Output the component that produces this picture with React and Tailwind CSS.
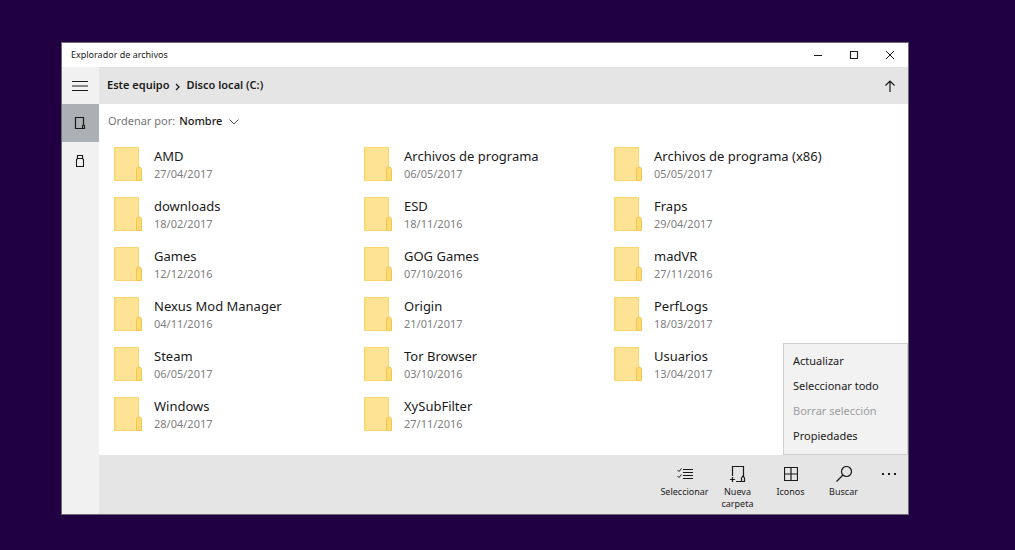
const folders = [
  ["AMD", "27/04/2017"],
  ["Archivos de programa", "06/05/2017"],
  ["Archivos de programa (x86)", "05/05/2017"],
  ["downloads", "18/02/2017"],
  ["ESD", "18/11/2016"],
  ["Fraps", "29/04/2017"],
  ["Games", "12/12/2016"],
  ["GOG Games", "07/10/2016"],
  ["madVR", "27/11/2016"],
  ["Nexus Mod Manager", "04/11/2016"],
  ["Origin", "21/01/2017"],
  ["PerfLogs", "18/03/2017"],
  ["Steam", "06/05/2017"],
  ["Tor Browser", "03/10/2016"],
  ["Usuarios", "13/04/2017"],
  ["Windows", "28/04/2017"],
  ["XySubFilter", "27/11/2016"],
];

function Icon({ w, h, children, className = "" }) {
  return (
    <svg
      width={w}
      height={h}
      viewBox={`0 0 ${w} ${h}`}
      fill="none"
      stroke="currentColor"
      aria-hidden="true"
      className={`shrink-0 ${className}`}
    >
      {children}
    </svg>
  );
}

function FolderIcon() {
  return (
    <Icon w={28} h={34}>
      <path d="M.5.5h24v33H.5z" fill="#ffe394" stroke="#f8d66e" />
      <path d="M1.500 1v32" stroke="#fbdc80" />
      <path d="M22.500 33.500V23q0-3 2.500-3t2.500 3v10.500z" fill="#fddb74" stroke="#f0c552" />
    </Icon>
  );
}

function TitleBar() {
  return (
    <header className="flex h-6 items-center bg-white">
      <h1 className="flex-1 pl-[9px] text-[9px] leading-3">Explorador de archivos</h1>
      <button aria-label="Minimizar" className="flex h-6 w-9 items-center justify-center">
        <Icon w={10} h={10}><path d="M1 5.500h8" /></Icon>
      </button>
      <button aria-label="Maximizar" className="flex h-6 w-9 items-center justify-center">
        <Icon w={10} h={10}><path d="M1.500 1.500h7v7h-7z" strokeWidth="1.100" /></Icon>
      </button>
      <button aria-label="Cerrar" className="flex h-6 w-9 items-center justify-center">
        <Icon w={10} h={10}><path d="m1 1 8 8M9 1 1 9" /></Icon>
      </button>
    </header>
  );
}

function Sidebar() {
  return (
    <nav aria-label="Unidades" className="flex w-[37px] shrink-0 flex-col bg-[#f1f1f1]">
      <button aria-label="Menú" className="flex h-[37px] items-center justify-center pr-[1px]">
        <Icon w={16} h={10}><path d="M0 .5h16M0 5h16M0 9.500h16" /></Icon>
      </button>
      <button aria-label="Disco local" className="flex h-[38px] items-center justify-center bg-[#aab0b3] pr-[1px]">
        <Icon w={12} h={12}>
          <path d="M8.500 11.500h-7V.5h8v7" strokeWidth="1.200" />
          <path d="M8.500 11.500V9l1-1.500 1 1.500v2.500z" strokeWidth="1.200" />
        </Icon>
      </button>
      <button aria-label="Unidad extraíble" className="flex h-[38px] items-center justify-center pr-[1px]">
        <Icon w={10} h={14}>
          <path d="M2.500 4.500v-3h5v3" strokeWidth="1.100" />
          <path d="M2.500 4.500h5l1 1v7h-7v-7z" strokeWidth="1.100" />
        </Icon>
      </button>
    </nav>
  );
}

function PathBar() {
  return (
    <div className="flex h-[37px] items-center bg-[#e5e5e5] pr-3 pl-2">
      <nav aria-label="Ruta" className="flex flex-1 items-center gap-[6px] text-[11px] font-semibold">
        <a href="#equipo">Este equipo</a>
        <Icon w={5} h={8} className="mt-[2px]"><path d="m1 1 3 3-3 3" strokeWidth="1.300" /></Icon>
        <a href="#disco">Disco local (C:)</a>
      </nav>
      <button aria-label="Subir">
        <Icon w={12} h={12}><path d="M6 12V1M1.500 5.500 6 1l4.500 4.500" strokeWidth="1.200" /></Icon>
      </button>
    </div>
  );
}

function CommandButton({ label, children }) {
  return (
    <button className="flex w-[53px] flex-col items-center gap-[2px] text-[9px] leading-3">
      <span className="flex h-5 items-center">{children}</span>
      {label}
    </button>
  );
}

function CommandBar() {
  return (
    <footer className="relative flex h-[59px] items-start justify-end bg-[#e5e5e5] pt-[9px] text-[#1a1a1a]">
      <CommandButton label="Seleccionar">
        <Icon w={16} h={14}>
          <path d="M6 2.500h10M6 5.500h10M6 8.500h10M6 11.500h10" />
          <path d="m.5 3 1.500 1.500L4.500 1.500M.5 9 2 10.500 4.500 7.500" />
        </Icon>
      </CommandButton>
      <CommandButton label="Nueva carpeta">
        <Icon w={16} h={18}>
          <path d="M2.500 11V1.500h11V12M6 16.500h6" strokeWidth="1.200" />
          <path d="M11.500 16.500V13l1.500-2 1.500 2v3.500z" strokeWidth="1.200" />
          <path d="M2.500 12v5M0 14.500h5" strokeWidth="1.200" />
        </Icon>
      </CommandButton>
      <CommandButton label="Iconos">
        <Icon w={14} h={14}>
          <path d="M.5.5h13v13H.5zM7 .5v13M.5 7h13" strokeWidth="1.200" />
        </Icon>
      </CommandButton>
      <CommandButton label="Buscar">
        <Icon w={16} h={16}>
          <circle cx="10.500" cy="5.500" r="5" strokeWidth="1.200" />
          <path d="M7 9 .5 15.500" strokeWidth="1.200" />
        </Icon>
      </CommandButton>
      <button aria-label="Más" aria-expanded="true" className="flex h-5 w-[38px] items-center justify-center">
        <Icon w={16} h={2}>
          <path d="M1 1h2M7 1h2M13 1h2" strokeWidth="2" />
        </Icon>
      </button>
      <div
        role="menu"
        className="absolute right-0 bottom-full flex w-[125px] flex-col border border-[#cfcfcf] bg-[#f2f2f2] py-[5px] text-[11px]"
      >
        <button role="menuitem" className="h-[25px] pl-[9px] text-left">Actualizar</button>
        <button role="menuitem" className="h-[25px] pl-[9px] text-left">Seleccionar todo</button>
        <button role="menuitem" disabled className="h-[25px] pl-[9px] text-left text-[#9d9d9d]">
          Borrar selección
        </button>
        <button role="menuitem" className="h-[25px] pl-[9px] text-left">Propiedades</button>
      </div>
    </footer>
  );
}

export default function App() {
  return (
    <div className="flex min-h-screen bg-[#210042] pt-[42px] pr-[106px] pb-[35px] pl-[61px] font-['Noto_Sans','Open_Sans',sans-serif] text-[#1a1a1a]">
      <div className="flex flex-1 flex-col border border-[#6d6a78] bg-white">
        <TitleBar />
        <div className="flex flex-1">
          <Sidebar />
          <div className="flex min-w-0 flex-1 flex-col">
            <PathBar />
            <main className="flex-1 pb-4">
              <div className="flex h-[35px] items-center pl-[9px] text-[11px]">
                <label htmlFor="orden" className="text-[#767676]">Ordenar por:</label>
                <select id="orden" className="ml-1 appearance-none bg-transparent font-medium">
                  <option>Nombre</option>
                </select>
                <Icon w={10} h={6} className="ml-[6px] text-[#555]"><path d="m.5.5 4.500 4.500L9.500.5" /></Icon>
              </div>
              <ul className="grid grid-cols-3 pr-11 pl-[15px]">
                {folders.map(([name, date]) => (
                  <li key={name}>
                    <a href="#carpeta" className="flex h-[50px] items-center gap-3">
                      <FolderIcon />
                      <span className="flex flex-col pt-[2px] whitespace-nowrap">
                        <span className="text-[13px] leading-[18px]">{name}</span>
                        <span className="text-[11px] leading-[18px] text-[#808080]">{date}</span>
                      </span>
                    </a>
                  </li>
                ))}
              </ul>
            </main>
            <CommandBar />
          </div>
        </div>
      </div>
    </div>
  );
}
